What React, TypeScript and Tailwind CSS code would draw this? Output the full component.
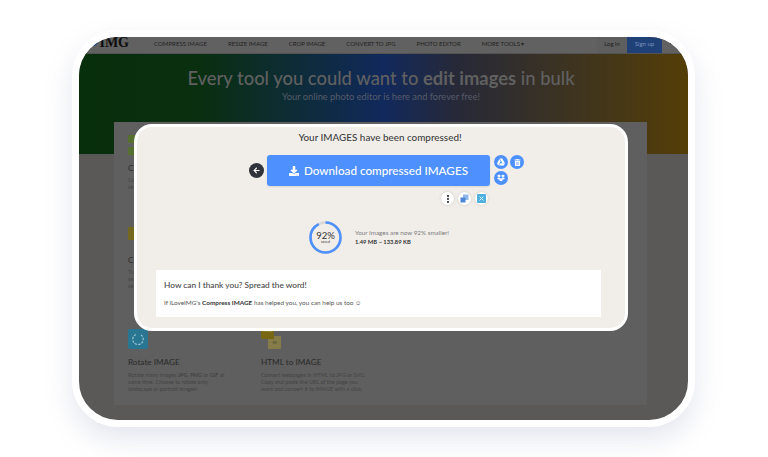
import { ArrowLeft, EllipsisVertical } from "lucide-react";
import { FaDownload, FaGoogleDrive, FaDropbox, FaTrashAlt, FaArrowLeft } from "react-icons/fa";

const font = { fontFamily: "Lato, 'Open Sans', sans-serif" };

function Tool({ icon, title, lines }: { icon: React.ReactNode; title: string; lines: React.ReactNode[] }) {
  return (
    <div className="w-[133px] shrink-0">
      <div className="h-[20px] relative">{icon}</div>
      <div className="mt-[7px] text-[8.2px] leading-[12px] text-[#2a2a2a]">{title}</div>
      <div className="mt-[4px] text-[5.5px] leading-[7.2px] text-[#444444]">
        {lines.map((l, i) => (
          <div key={i} className="whitespace-nowrap">{l}</div>
        ))}
      </div>
    </div>
  );
}

function Bubble({ children }: { children: React.ReactNode }) {
  return (
    <div className="w-[14px] h-[14px] rounded-full bg-[#4d90fe] flex items-center justify-center text-white">{children}</div>
  );
}

function WhiteDot({ children }: { children: React.ReactNode }) {
  return (
    <div className="w-[13px] h-[13px] rounded-full bg-white flex items-center justify-center shadow-[0_0_3px_rgba(0,0,0,0.15)]">{children}</div>
  );
}

export default function App() {
  return (
    <div className="w-[768px] h-[457px] bg-white overflow-hidden flex justify-center pt-[30px]" style={font}>
      <div className="w-[623px] h-[397px] ml-[-1px] rounded-[46px] border-[7px] border-white shadow-[0_12px_28px_rgba(120,130,170,0.2)] bg-[#5a5957] overflow-hidden relative flex flex-col">
        {/* Nav */}
        <div className="h-[17px] shrink-0 bg-[#616161] flex items-center text-[6px] text-[#222222] border-b border-[#535353]">
          <div className="w-[50px] flex justify-end items-start h-full relative">
            <svg width="10" height="8" viewBox="0 0 10 8" className="absolute left-[12px] top-[1px]"><path d="M0 8L9 0l1 2-6 6z" fill="#23468a" /></svg>
            <span className="text-[#0d0d0d] font-bold text-[14px] leading-[12px]" style={{ fontFamily: "'Liberation Serif', serif" }}>IMG</span>
          </div>
          <div className="flex items-center ml-[25px] gap-[21px] whitespace-nowrap mt-[-4px]">
            <span className="tracking-[0.05px]">COMPRESS IMAGE</span>
            <span>RESIZE IMAGE</span>
            <span>CROP IMAGE</span>
            <span>CONVERT TO JPG</span>
            <span>PHOTO EDITOR</span>
            <span>MORE TOOLS ▾</span>
          </div>
          <div className="ml-auto flex h-full mr-[26px]">
            <div className="w-[30px] flex items-center justify-center bg-[#5e5e5e] text-[#222] pb-[4px]">Log in</div>
            <div className="w-[35px] flex items-center justify-center bg-[#204078] text-[#7a93bd] pb-[4px]">Sign up</div>
          </div>
          <div className="absolute right-[8px] top-[6px] w-[10px] h-[1px] bg-[#222]" />
        </div>
        {/* Hero */}
        <div className="h-[100px] shrink-0 bg-[linear-gradient(90deg,#082f0b_0%,#092f10_20%,#11295c_50%,#272938_62%,#543e07_100%)] flex flex-col items-center pr-[5px]">
          <div className="mt-[12px] text-[18.4px] leading-[24px] text-[#606060] font-medium">
            Every tool you could want to <b className="font-bold">edit images</b> in bulk
          </div>
          <div className="mt-[1px] text-[9.3px] leading-[12px] text-[#555c6a]">Your online photo editor is here and forever free!</div>
        </div>
        {/* Tool panel */}
        <div className="ml-[35px] mr-[41px] mt-[-32px] h-[283px] shrink-0 bg-[#5f5f5f] relative pl-[14px] pt-[13px] flex flex-col">
          <div className="h-[92px]">
            <div className="w-[8px] h-[8px] rounded-[1px] bg-[#55702f]" />
            <div className="w-[8px] h-[8px] mt-[4px] rounded-[1px] bg-[#55702f]" />
            <div className="mt-[7px] text-[8.2px] leading-[12px] text-[#2a2a2a]">C</div>
            <div className="text-[5.5px] leading-[7px] text-[#444444] mt-[3px]">Co<br />se</div>
          </div>
          <div className="h-[102px]">
            <div className="w-[8px] h-[13px] rounded-[1px] bg-[#746820]" />
            <div className="mt-[14px] text-[8.2px] leading-[12px] text-[#2a2a2a]">C</div>
            <div className="text-[5.5px] leading-[7px] text-[#444444] mt-[3px]">Tu<br />se<br />se</div>
          </div>
          <div className="flex">
            <Tool
              title="Rotate IMAGE"
              icon={
                <div className="w-[20px] h-[20px] rounded-[2px] bg-[#297693] flex items-center justify-center">
                  <svg width="14" height="14" viewBox="0 0 24 24" fill="none" stroke="#9fc6d4" strokeWidth="2" strokeDasharray="4 2">
                    <path d="M17 5a9 9 0 1 1-8-1" />
                  </svg>
                </div>
              }
              lines={[
                <>Rotate many images <b>JPG</b>, <b>PNG</b> or <b>GIF</b> at</>,
                "same time. Choose to rotate only",
                "landscape or portrait images!",
              ]}
            />
            <Tool
              title="HTML to IMAGE"
              icon={
                <>
                  <div className="absolute left-[7px] top-[7px] w-[13px] h-[13px] rounded-[1px] bg-[#857c4a] flex items-center justify-center text-[4px] text-[#3c3a20]">M</div>
                  <div className="absolute left-0 top-0 w-[13px] h-[10px] rounded-[1px] bg-[#786614] text-[3.5px] text-[#c9bd80] leading-[5px] text-center">HTML</div>
                </>
              }
              lines={[
                "Convert webpages in HTML to JPG or SVG.",
                "Copy and paste the URL of the page you",
                "want and convert it to IMAGE with a click.",
              ]}
            />
          </div>
        </div>

        {/* Modal */}
        <div className="absolute left-[55px] top-[87px] w-[494px] h-[207px] rounded-[18px] border-[3px] border-white bg-[#f1eeea] flex flex-col items-center">
          <div className="mt-[3px] text-[9.9px] leading-[14px] font-medium text-[#3d3d3d] pr-[2px]">Your IMAGES have been compressed!</div>
          <div className="relative mt-[11px] w-[223px] h-[31px] ml-[-5px]">
            <div className="w-full h-full rounded-[3px] bg-[#4d90fe] flex items-center justify-center gap-[5px] text-white text-[11.7px] font-medium shadow-[0_1px_2px_rgba(0,0,0,0.1)]">
              <FaDownload size={10} />
              <span>Download compressed IMAGES</span>
            </div>
            <div className="absolute left-[-18px] top-[8px] w-[15px] h-[15px] rounded-full bg-[#30343a] flex items-center justify-center text-white">
              <FaArrowLeft size={7} />
            </div>
            <div className="absolute left-[227px] top-0 grid grid-cols-[14px_14px] gap-x-[2px] gap-y-[2px]">
              <Bubble><FaGoogleDrive size={8} /></Bubble>
              <Bubble><FaTrashAlt size={7} /></Bubble>
              <Bubble><FaDropbox size={8} /></Bubble>
            </div>
            <div className="absolute left-[174px] top-[37px] flex gap-[4px]">
              <WhiteDot><EllipsisVertical size={10} strokeWidth={3} className="text-[#222]" /></WhiteDot>
              <WhiteDot>
                <svg width="9" height="9" viewBox="0 0 9 9"><rect x="3" y="0.5" width="5.5" height="5.5" fill="#8fb8e8" /><rect x="0.5" y="3.5" width="5" height="5" fill="#4d86d6" /></svg>
              </WhiteDot>
              <WhiteDot>
                <svg width="9" height="9" viewBox="0 0 9 9"><rect width="9" height="9" rx="1" fill="#4fb0e0" /><path d="M2.5 2.5l4 4M6.5 2.5l-4 4" stroke="#d6eefa" strokeWidth="1" /></svg>
              </WhiteDot>
            </div>
          </div>
          <div className="mt-[35px] flex items-center self-start ml-[172px]">
            <div className="relative w-[33px] h-[33px]">
              <svg width="33" height="33" viewBox="0 0 33 33" className="-rotate-90">
                <circle cx="16.5" cy="16.5" r="15" fill="none" stroke="#d8d8d8" strokeWidth="2.6" />
                <circle cx="16.5" cy="16.5" r="15" fill="none" stroke="#4d90fe" strokeWidth="2.6" strokeDasharray="86.7 94.2" />
              </svg>
              <div className="absolute inset-0 flex flex-col items-center justify-center text-[#333]">
                <div className="text-[9.5px] leading-[9px] mt-[-1px]">92%</div>
                <div className="text-[3.5px] leading-[4px]">saved</div>
              </div>
            </div>
            <div className="ml-[13px] mt-[-1px]">
              <div className="text-[6.3px] leading-[9px] text-[#7b7b7b]">Your Images are now 92% smaller!</div>
              <div className="text-[5.8px] leading-[9px] font-bold text-[#333]">1.49 MB ~ 133.89 KB</div>
            </div>
          </div>
          <div className="mt-[16px] w-[445px] h-[47px] self-start ml-[19px] bg-white px-[8px] pt-[9px]">
            <div className="text-[8.3px] leading-[12px] font-medium text-[#464646]">How can I thank you? Spread the word!</div>
            <div className="mt-[8px] text-[6.4px] leading-[8px] text-[#555]">
              If iLoveIMG's <b className="text-[#333]">Compress IMAGE</b> has helped you, you can help us too ☺
            </div>
          </div>
        </div>
      </div>
    </div>
  );
}
